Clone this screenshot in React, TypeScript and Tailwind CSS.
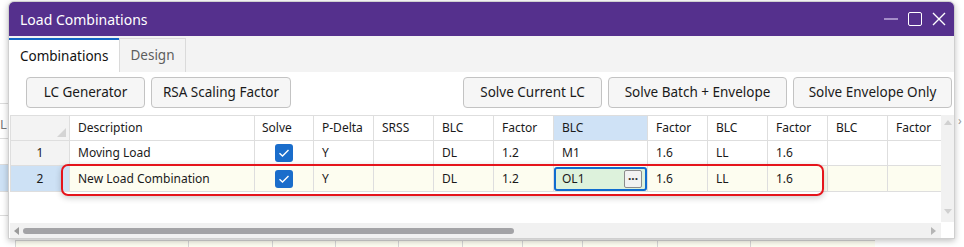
import React from "react";

const FONT = { fontFamily: '"Noto Sans", "Open Sans", sans-serif' };

const widths = [59, 185, 59, 60, 60, 60, 60, 94, 60, 60, 60, 60, 54];
const headers = ["", "Description", "Solve", "P-Delta", "SRSS", "BLC", "Factor", "BLC", "Factor", "BLC", "Factor", "BLC", "Factor"];

type Cell = string | { check: true } | { edit: string };

const rows: Cell[][] = [
  ["1", "Moving Load", { check: true }, "Y", "", "DL", "1.2", "M1", "1.6", "LL", "1.6", "", ""],
  ["2", "New Load Combination", { check: true }, "Y", "", "DL", "1.2", { edit: "OL1" }, "1.6", "LL", "1.6", "", ""],
];

function CheckBox() {
  return (
    <div className="flex h-[18px] w-[18px] items-center justify-center rounded-[3px] bg-[#1a6dcb]">
      <svg width="12" height="10" viewBox="0 0 12 10">
        <path d="M1.5 5.2 L4.5 8 L10.5 2" fill="none" stroke="white" strokeWidth="1.4" />
      </svg>
    </div>
  );
}

function Btn({ label, w }: { label: string; w: number }) {
  return (
    <button
      className="flex h-[31px] items-center justify-center rounded-[4px] border border-[#c3c3c3] bg-[#f6f6f6] text-[13.5px] text-[#1a1a1a]"
      style={{ width: w }}
    >
      {label}
    </button>
  );
}

export default function App() {
  return (
    <div className="relative h-[247px] w-[964px] overflow-hidden bg-white" style={FONT}>
      {/* app behind the dialog */}
      <div className="absolute left-0 top-[103px] h-[1px] w-[8px] bg-[#dcdcdc]" />
      <div className="absolute left-0 top-[115px] text-[13px] text-[#777]">L</div>
      <div className="absolute left-0 top-[138px] h-[1px] w-[8px] bg-[#dcdcdc]" />
      <div className="absolute left-0 top-[164px] h-[28px] w-[8px] border-y border-[#dcdcdc] bg-[#cde1f5]" />
      <div className="absolute left-0 top-[215px] h-[1px] w-[8px] bg-[#dcdcdc]" />
      <div className="absolute left-[958px] top-[112px] text-[12px] text-[#999]">›</div>
      <div className="absolute left-[15px] top-[240px] flex h-[7px] w-[860px] border-t border-[#d6d6d6] bg-[#fdfdf1]">
        {[173, 84, 63, 63, 64, 60, 60, 75, 93, 118].map((w, i) => (
          <div key={i} className="h-full border-l border-[#d6d6d6]" style={{ width: w }} />
        ))}
      </div>

      {/* dialog */}
      <div className="absolute left-[8px] top-[1px] flex h-[238px] w-[947px] flex-col overflow-hidden rounded-t-[6px] border border-[#cfcfcf] bg-white shadow-[0_2px_6px_rgba(0,0,0,0.25)]">
        <div className="flex h-[34px] shrink-0 items-center bg-[#55308d] pl-[11px] pr-[8px] text-[14px] text-white">
          <span className="flex-1">Load Combinations</span>
          <div className="flex items-center gap-[10px]">
            <div className="h-[2px] w-[14px] bg-[#a48cc8]" />
            <div className="h-[14px] w-[14px] rounded-[2px] border-[1.5px] border-white" />
            <svg width="14" height="14" viewBox="0 0 14 14">
              <path d="M1 1 L13 13 M13 1 L1 13" stroke="white" strokeWidth="1.4" />
            </svg>
          </div>
        </div>

        <div className="flex h-[36px] shrink-0 items-end bg-[#f3f3f3]">
          <div className="flex h-[34px] w-[110px] items-center border-t-2 border-[#1266c4] bg-white pl-[11px] text-[13.5px] text-[#111]">
            Combinations
          </div>
          <div className="flex h-[34px] w-[67px] items-center justify-center border-x border-t border-[#dadada] bg-[#f3f3f3] text-[13.5px] text-[#5d5d5d]">
            Design
          </div>
        </div>

        <div className="flex flex-1 flex-col">
          <div className="mt-[5px] flex h-[31px] pl-[17px]">
            <div className="flex gap-[6px]">
              <Btn label="LC Generator" w={119} />
              <Btn label="RSA Scaling Factor" w={140} />
            </div>
            <div className="ml-[172px] flex gap-[6px]">
              <Btn label="Solve Current LC" w={139} />
              <Btn label="Solve Batch + Envelope" w={179} />
              <Btn label="Solve Envelope Only" w={159} />
            </div>
          </div>

          <div className="ml-[1px] mt-[7px] flex h-[123px] w-[945px]">
            <div className="flex w-[931px] flex-col overflow-hidden">
              <div className="flex-1 overflow-hidden">
                {/* header */}
                <div className="flex h-[26px] w-max border-t border-l border-[#dedede] text-[12px] text-[#1a1a1a]">
                  {headers.map((h, i) => (
                    <div
                      key={i}
                      className={`relative flex shrink-0 items-center border-b border-r border-[#dedede] ${i === 0 ? "bg-[#f3f3f3]" : i === 7 ? "bg-[#cfe2f6]" : "bg-white"} ${i === 2 ? "pl-[7px]" : "pl-[8px]"}`}
                      style={{ width: widths[i] }}
                    >
                      {h}
                      {i === 0 && (
                        <div className="absolute bottom-[3px] right-[3px] h-0 w-0 border-b-[9px] border-l-[9px] border-b-[#d4d4d4] border-l-transparent" />
                      )}
                    </div>
                  ))}
                </div>
                {rows.map((r, ri) => (
                  <div
                    key={ri}
                    className={`flex w-max border-l border-[#dedede] text-[12px] text-[#1a1a1a] ${ri === 0 ? "h-[25px]" : "h-[26px]"}`}
                  >
                    {r.map((c, ci) => {
                      const bg =
                        ci === 0 ? (ri === 1 ? "bg-[#cde1f5]" : "bg-[#f3f3f3]") : ri === 1 ? "bg-[#fdfdf0]" : "bg-white";
                      return (
                        <div
                          key={ci}
                          className={`flex shrink-0 items-center border-b border-r border-[#dedede] ${bg} ${ci === 0 ? "justify-center" : ci === 2 ? "justify-center" : "pl-[8px]"}`}
                          style={{ width: widths[ci] }}
                        >
                          {typeof c === "string" ? (
                            c
                          ) : "check" in c ? (
                            <CheckBox />
                          ) : (
                            <div className="-ml-[8px] flex h-[24px] w-[93px] items-center justify-between rounded-[3px] border-2 border-[#0f6ccf] bg-[#ddf2dc] pl-[6px] pr-[3px]">
                              <span>{c.edit}</span>
                              <div className="flex h-[18px] w-[18px] items-center justify-center rounded-[2px] border border-[#8c8c8c] bg-[#f2f2f2] pb-[5px] text-[12px] font-bold leading-none text-[#333]">
                                ...
                              </div>
                            </div>
                          )}
                        </div>
                      );
                    })}
                  </div>
                ))}
              </div>
              {/* horizontal scrollbar */}
              <div className="flex h-[15px] shrink-0 items-center bg-[#f1f1f1] pl-[4px] pr-[5px]">
                <div className="h-0 w-0 border-y-[4px] border-r-[5px] border-y-transparent border-r-[#9a9a9a]" />
                <div className="ml-[4px] h-[6px] w-[491px] rounded-full bg-[#a3a3a6]" />
                <div className="flex-1" />
                <div className="h-0 w-0 border-y-[4px] border-l-[5px] border-y-transparent border-l-[#b5b5b5]" />
              </div>
            </div>
            {/* vertical scrollbar */}
            <div className="flex w-[14px] flex-col">
              <div className="flex h-[107px] flex-col items-center justify-between bg-[#f1f1f1] py-[5px]">
                <div className="h-0 w-0 border-x-[4px] border-b-[5px] border-x-transparent border-b-[#d0d0d0]" />
                <div className="mb-[3px] h-0 w-0 border-x-[4px] border-t-[5px] border-x-transparent border-t-[#d0d0d0]" />
              </div>
              <div className="flex-1 bg-white" />
            </div>
          </div>
        </div>
      </div>

      {/* highlight around the edited row */}
      <div className="absolute left-[61px] top-[164px] h-[32px] w-[763px] rounded-[7px] border-2 border-[#e5141c] shadow-[0_2px_6px_rgba(0,0,0,0.2)]" />
    </div>
  );
}
